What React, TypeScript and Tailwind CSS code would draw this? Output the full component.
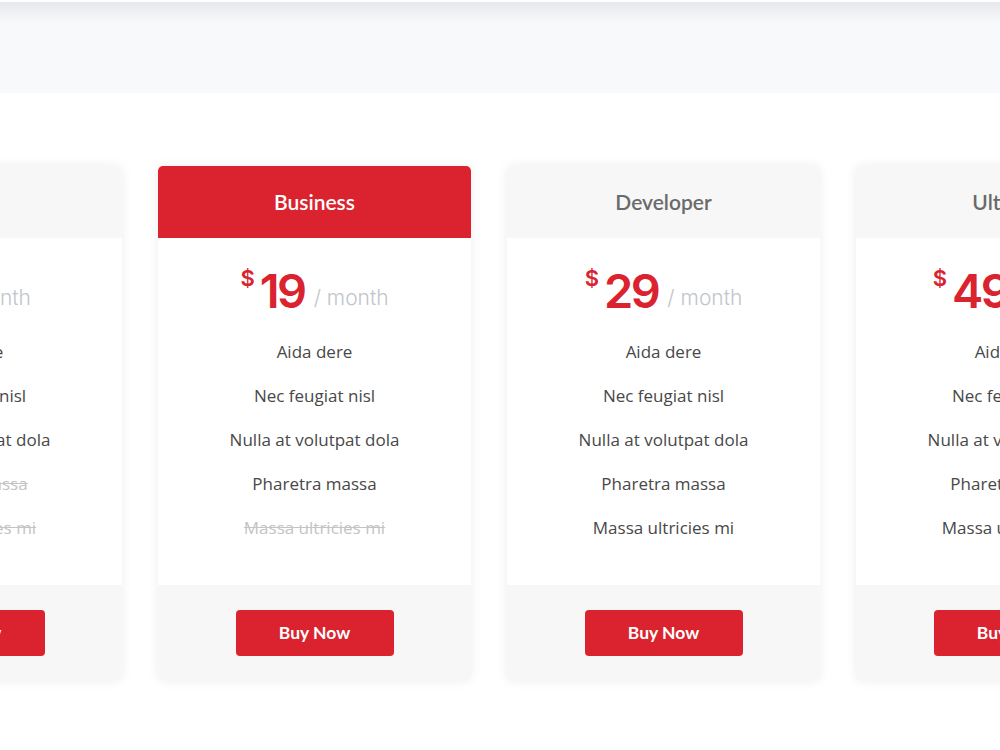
import React from "react";

type Plan = {
  name: string;
  price: string;
  featured?: boolean;
  struck: number[];
};

const plans: Plan[] = [
  { name: "Free", price: "9", struck: [3, 4] },
  { name: "Business", price: "19", featured: true, struck: [4] },
  { name: "Developer", price: "29", struck: [] },
  { name: "Ultimate", price: "49", struck: [] },
];

const features = [
  "Aida dere",
  "Nec feugiat nisl",
  "Nulla at volutpat dola",
  "Pharetra massa",
  "Massa ultricies mi",
];

function Card({ plan }: { plan: Plan }) {
  return (
    <div className="w-[313px] shrink-0 rounded-[5px] bg-white shadow-[0_0_12px_rgba(0,0,0,0.07)] overflow-hidden flex flex-col">
      <div
        className={
          plan.featured
            ? "h-[72px] flex items-center justify-center bg-[#da232e] text-white text-[21px] font-semibold font-['Lato',sans-serif]"
            : "h-[72px] flex items-center justify-center bg-[#f7f7f7] text-[#6a6a6a] text-[21px] font-semibold font-['Lato',sans-serif]"
        }
      >
        {plan.name}
      </div>
      <div className="bg-white flex flex-col items-center pt-[28px] pb-[35px]">
        <div className="flex items-start justify-center h-[64px] font-['Inter',sans-serif]">
          <span className="text-[22px] font-semibold text-[#da232e] mt-[1px] mr-[5px] leading-none">$</span>
          <span className="text-[47px] font-semibold text-[#da232e] leading-[50px] tracking-[-2.5px]">{plan.price}</span>
          <span className="text-[21px] font-light text-[#c1c5ca] ml-[9px] mt-[21px] leading-none">/ month</span>
        </div>
        <ul className="flex flex-col items-center font-['Open_Sans',sans-serif] text-[17px]">
          {features.map((f, i) => (
            <li
              key={f}
              className={
                plan.struck.includes(i)
                  ? "h-[44px] flex items-center text-[#c4c4c4] line-through"
                  : "h-[44px] flex items-center text-[#484848]"
              }
            >
              {f}
            </li>
          ))}
        </ul>
      </div>
      <div className="bg-[#f7f7f7] flex justify-center py-[25px]">
        <button className="w-[158px] h-[46px] rounded-[4px] bg-[#da232e] text-white text-[17.5px] font-bold font-['Lato',sans-serif]">
          Buy Now
        </button>
      </div>
    </div>
  );
}

export default function App() {
  return (
    <div className="w-[1000px] h-[750px] bg-white overflow-hidden">
      <div className="h-[93px] flex flex-col">
        <div className="h-[2px] bg-white" />
        <div className="h-[22px] bg-gradient-to-b from-[#e7e8eb] to-[#f8f9fb]" />
        <div className="flex-1 bg-[#f8f9fb]" />
      </div>
      <div className="pt-[73px] flex gap-[36px] ml-[-191px]">
        {plans.map((p) => (
          <Card key={p.name} plan={p} />
        ))}
      </div>
    </div>
  );
}
